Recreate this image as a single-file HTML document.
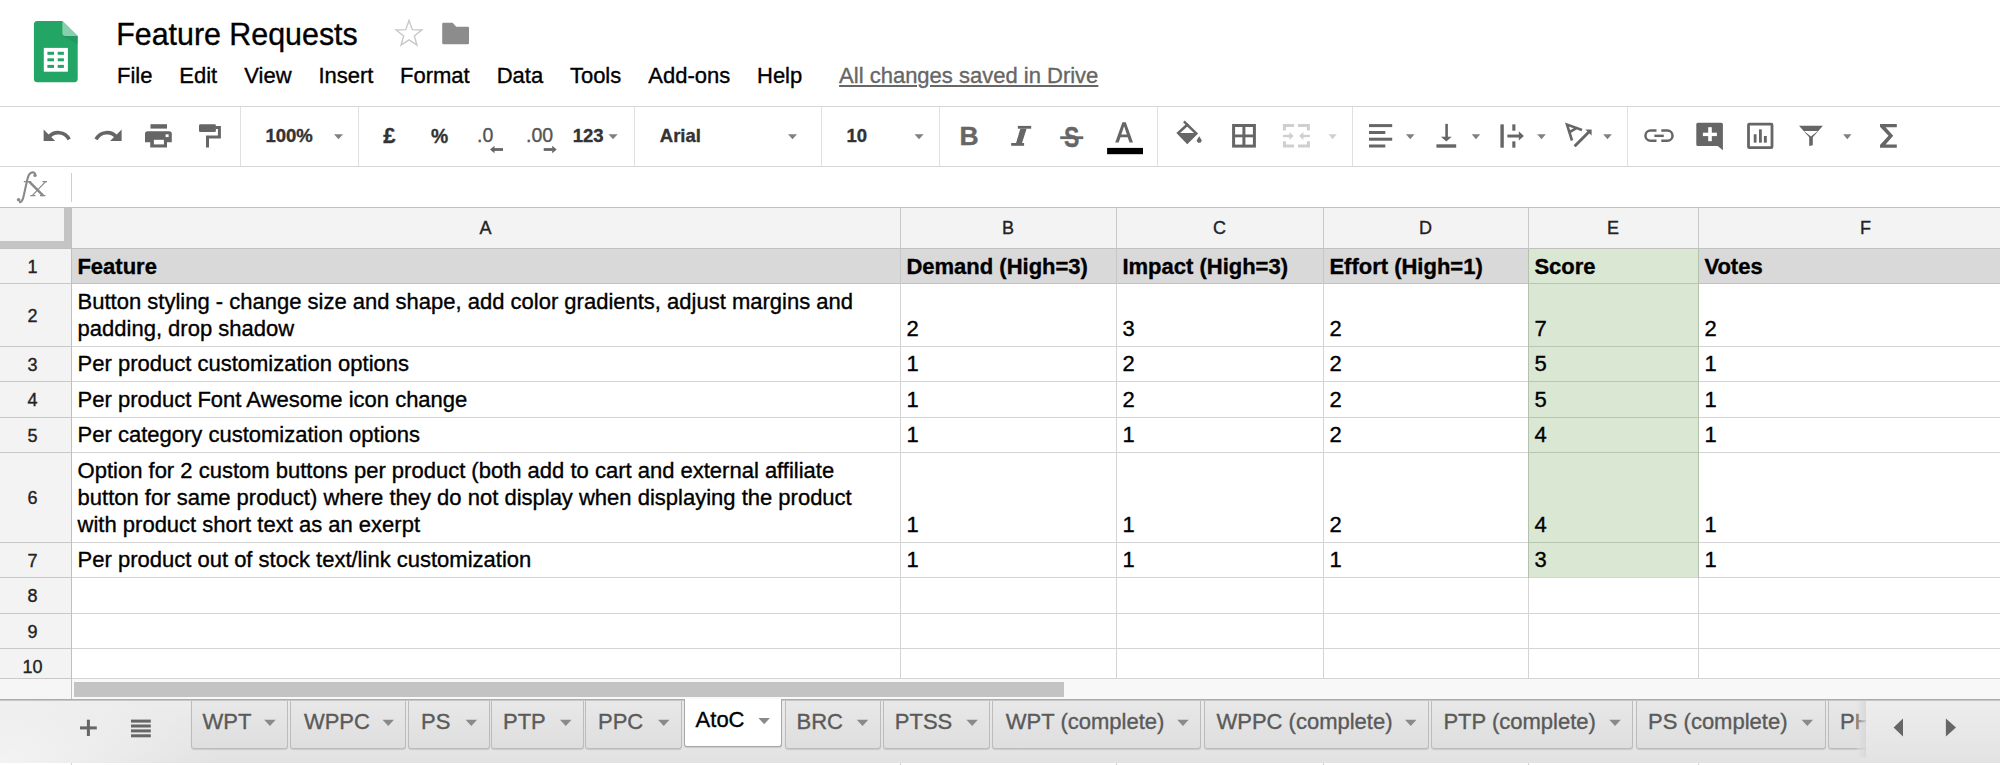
<!DOCTYPE html>
<html><head><meta charset="utf-8"><style>
html,body{margin:0;padding:0;width:2000px;height:765px;overflow:hidden;background:#fff;position:relative;font-family:'Liberation Sans', sans-serif}
.t{position:absolute;white-space:pre;-webkit-text-stroke:0.35px currentColor}
.r{position:absolute}
svg.ic{position:absolute;left:0;top:0}
</style></head><body>
<div class="t" style="left:116.20px;top:19.17px;font-size:30.4px;line-height:30.4px;color:#000;font-weight:normal;font-family:'Liberation Sans', sans-serif;transform:scaleY(1.05);transform-origin:0 25.7px;">Feature Requests</div>
<div class="t" style="left:117.00px;top:64.88px;font-size:22px;line-height:22px;color:#000;font-weight:normal;font-family:'Liberation Sans', sans-serif;">File</div>
<div class="t" style="left:179.30px;top:64.88px;font-size:22px;line-height:22px;color:#000;font-weight:normal;font-family:'Liberation Sans', sans-serif;">Edit</div>
<div class="t" style="left:244.30px;top:64.88px;font-size:22px;line-height:22px;color:#000;font-weight:normal;font-family:'Liberation Sans', sans-serif;">View</div>
<div class="t" style="left:318.40px;top:64.88px;font-size:22px;line-height:22px;color:#000;font-weight:normal;font-family:'Liberation Sans', sans-serif;">Insert</div>
<div class="t" style="left:400.00px;top:64.88px;font-size:22px;line-height:22px;color:#000;font-weight:normal;font-family:'Liberation Sans', sans-serif;">Format</div>
<div class="t" style="left:496.70px;top:64.88px;font-size:22px;line-height:22px;color:#000;font-weight:normal;font-family:'Liberation Sans', sans-serif;">Data</div>
<div class="t" style="left:569.90px;top:64.88px;font-size:22px;line-height:22px;color:#000;font-weight:normal;font-family:'Liberation Sans', sans-serif;">Tools</div>
<div class="t" style="left:648.30px;top:64.88px;font-size:22px;line-height:22px;color:#000;font-weight:normal;font-family:'Liberation Sans', sans-serif;">Add-ons</div>
<div class="t" style="left:757.00px;top:64.88px;font-size:22px;line-height:22px;color:#000;font-weight:normal;font-family:'Liberation Sans', sans-serif;">Help</div>
<div class="t" style="left:839.10px;top:64.88px;font-size:22px;line-height:22px;color:#666;font-weight:normal;font-family:'Liberation Sans', sans-serif;text-decoration:underline;text-decoration-thickness:1.6px;text-underline-offset:2px;">All changes saved in Drive</div>
<div class="r" style="left:0px;top:106px;width:2000px;height:1px;background:#d6d6d6;"></div>
<div class="r" style="left:0px;top:166px;width:2000px;height:1px;background:#d6d6d6;"></div>
<div class="r" style="left:240px;top:107px;width:1px;height:59px;background:#e0e0e0;"></div>
<div class="r" style="left:358px;top:107px;width:1px;height:59px;background:#e0e0e0;"></div>
<div class="r" style="left:634px;top:107px;width:1px;height:59px;background:#e0e0e0;"></div>
<div class="r" style="left:821px;top:107px;width:1px;height:59px;background:#e0e0e0;"></div>
<div class="r" style="left:939px;top:107px;width:1px;height:59px;background:#e0e0e0;"></div>
<div class="r" style="left:1157px;top:107px;width:1px;height:59px;background:#e0e0e0;"></div>
<div class="r" style="left:1352px;top:107px;width:1px;height:59px;background:#e0e0e0;"></div>
<div class="r" style="left:1627px;top:107px;width:1px;height:59px;background:#e0e0e0;"></div>
<div class="t" style="left:265.50px;top:127.14px;font-size:18.5px;line-height:18.5px;color:#333;font-weight:bold;font-family:'Liberation Sans', sans-serif;">100%</div>
<div class="t" style="left:383.20px;top:124.58px;font-size:22px;line-height:22px;color:#333;font-weight:bold;font-family:'Liberation Sans', sans-serif;">£</div>
<div class="t" style="left:430.60px;top:125.42px;font-size:21px;line-height:21px;color:#333;font-weight:bold;font-family:'Liberation Sans', sans-serif;transform:scaleX(0.92);transform-origin:left;">%</div>
<div class="t" style="left:477.00px;top:126.49px;font-size:19.5px;line-height:19.5px;color:#555;font-weight:normal;font-family:'Liberation Sans', sans-serif;">.0</div>
<div class="t" style="left:526.00px;top:126.49px;font-size:19.5px;line-height:19.5px;color:#555;font-weight:normal;font-family:'Liberation Sans', sans-serif;">.00</div>
<div class="t" style="left:572.70px;top:127.34px;font-size:18.5px;line-height:18.5px;color:#333;font-weight:bold;font-family:'Liberation Sans', sans-serif;">123</div>
<div class="t" style="left:659.80px;top:127.14px;font-size:18.5px;line-height:18.5px;color:#333;font-weight:bold;font-family:'Liberation Sans', sans-serif;">Arial</div>
<div class="t" style="left:846.50px;top:127.14px;font-size:18.5px;line-height:18.5px;color:#333;font-weight:bold;font-family:'Liberation Sans', sans-serif;">10</div>
<div class="t" style="left:959.50px;top:123.47px;font-size:26.5px;line-height:26.5px;color:#666;font-weight:bold;font-family:'Liberation Sans', sans-serif;">B</div>
<div class="t" style="left:1063.60px;top:121.63px;font-size:29.5px;line-height:29.5px;color:#666;font-weight:bold;font-family:'Liberation Sans', sans-serif;transform:scaleX(0.78);transform-origin:left">S</div>
<div class="r" style="left:71px;top:173px;width:1px;height:29px;background:#cfcfcf;"></div>
<div class="r" style="left:0px;top:207px;width:2000px;height:1px;background:#c0c0c0;"></div>
<div class="r" style="left:0px;top:208px;width:2000px;height:40px;background:#f3f3f3;"></div>
<div class="r" style="left:0px;top:248px;width:71px;height:431px;background:#f3f3f3;"></div>
<div class="r" style="left:72px;top:248px;width:1928px;height:35px;background:#d9d9d9;"></div>
<div class="r" style="left:1529px;top:249px;width:169px;height:329px;background:#d9e7d3;"></div>
<div class="r" style="left:0px;top:248px;width:2000px;height:1px;background:#c0c0c0;"></div>
<div class="r" style="left:0px;top:283px;width:71px;height:1px;background:#c8c8c8;"></div>
<div class="r" style="left:72px;top:283px;width:1928px;height:1px;background:#c2c2c2;"></div>
<div class="r" style="left:0px;top:346px;width:71px;height:1px;background:#c8c8c8;"></div>
<div class="r" style="left:72px;top:346px;width:1928px;height:1px;background:#d4d4d4;"></div>
<div class="r" style="left:0px;top:381px;width:71px;height:1px;background:#c8c8c8;"></div>
<div class="r" style="left:72px;top:381px;width:1928px;height:1px;background:#d4d4d4;"></div>
<div class="r" style="left:0px;top:417px;width:71px;height:1px;background:#c8c8c8;"></div>
<div class="r" style="left:72px;top:417px;width:1928px;height:1px;background:#d4d4d4;"></div>
<div class="r" style="left:0px;top:452px;width:71px;height:1px;background:#c8c8c8;"></div>
<div class="r" style="left:72px;top:452px;width:1928px;height:1px;background:#d4d4d4;"></div>
<div class="r" style="left:0px;top:542px;width:71px;height:1px;background:#c8c8c8;"></div>
<div class="r" style="left:72px;top:542px;width:1928px;height:1px;background:#d4d4d4;"></div>
<div class="r" style="left:0px;top:577px;width:71px;height:1px;background:#c8c8c8;"></div>
<div class="r" style="left:72px;top:577px;width:1928px;height:1px;background:#d4d4d4;"></div>
<div class="r" style="left:0px;top:613px;width:71px;height:1px;background:#c8c8c8;"></div>
<div class="r" style="left:72px;top:613px;width:1928px;height:1px;background:#d4d4d4;"></div>
<div class="r" style="left:0px;top:648px;width:71px;height:1px;background:#c8c8c8;"></div>
<div class="r" style="left:72px;top:648px;width:1928px;height:1px;background:#d4d4d4;"></div>
<div class="r" style="left:0px;top:678px;width:71px;height:1px;background:#c8c8c8;"></div>
<div class="r" style="left:72px;top:678px;width:1928px;height:1px;background:#d4d4d4;"></div>
<div class="r" style="left:1529px;top:283px;width:169px;height:1px;background:#b7c6b0;"></div>
<div class="r" style="left:1529px;top:346px;width:169px;height:1px;background:#b7c6b0;"></div>
<div class="r" style="left:1529px;top:381px;width:169px;height:1px;background:#b7c6b0;"></div>
<div class="r" style="left:1529px;top:417px;width:169px;height:1px;background:#b7c6b0;"></div>
<div class="r" style="left:1529px;top:452px;width:169px;height:1px;background:#b7c6b0;"></div>
<div class="r" style="left:1529px;top:542px;width:169px;height:1px;background:#b7c6b0;"></div>
<div class="r" style="left:71px;top:208px;width:1px;height:491px;background:#c0c0c0;"></div>
<div class="r" style="left:900px;top:208px;width:1px;height:40px;background:#c8c8c8;"></div>
<div class="r" style="left:900px;top:248px;width:1px;height:35px;background:#c6c6c6;"></div>
<div class="r" style="left:900px;top:283px;width:1px;height:396px;background:#d4d4d4;"></div>
<div class="r" style="left:1116px;top:208px;width:1px;height:40px;background:#c8c8c8;"></div>
<div class="r" style="left:1116px;top:248px;width:1px;height:35px;background:#c6c6c6;"></div>
<div class="r" style="left:1116px;top:283px;width:1px;height:396px;background:#d4d4d4;"></div>
<div class="r" style="left:1323px;top:208px;width:1px;height:40px;background:#c8c8c8;"></div>
<div class="r" style="left:1323px;top:248px;width:1px;height:35px;background:#c6c6c6;"></div>
<div class="r" style="left:1323px;top:283px;width:1px;height:396px;background:#d4d4d4;"></div>
<div class="r" style="left:1528px;top:208px;width:1px;height:40px;background:#c8c8c8;"></div>
<div class="r" style="left:1528px;top:248px;width:1px;height:35px;background:#c6c6c6;"></div>
<div class="r" style="left:1528px;top:283px;width:1px;height:396px;background:#d4d4d4;"></div>
<div class="r" style="left:1698px;top:208px;width:1px;height:40px;background:#c8c8c8;"></div>
<div class="r" style="left:1698px;top:248px;width:1px;height:35px;background:#c6c6c6;"></div>
<div class="r" style="left:1698px;top:283px;width:1px;height:396px;background:#d4d4d4;"></div>
<div class="r" style="left:1528px;top:249px;width:1px;height:329px;background:#b4c2ad;"></div>
<div class="r" style="left:1698px;top:249px;width:1px;height:329px;background:#b4c2ad;"></div>
<div class="r" style="left:64px;top:208px;width:7px;height:40px;background:#c4c4c4;"></div>
<div class="r" style="left:0px;top:241px;width:71px;height:7px;background:#c4c4c4;"></div>
<div class="r" style="left:0px;top:208px;width:64px;height:33px;background:#f3f3f3;"></div>
<div class="t" style="left:71px;width:829px;text-align:center;top:219.26px;font-size:18px;line-height:18px;color:#222">A</div>
<div class="t" style="left:900px;width:216px;text-align:center;top:219.26px;font-size:18px;line-height:18px;color:#222">B</div>
<div class="t" style="left:1116px;width:207px;text-align:center;top:219.26px;font-size:18px;line-height:18px;color:#222">C</div>
<div class="t" style="left:1323px;width:205px;text-align:center;top:219.26px;font-size:18px;line-height:18px;color:#222">D</div>
<div class="t" style="left:1528px;width:170px;text-align:center;top:219.26px;font-size:18px;line-height:18px;color:#222">E</div>
<div class="t" style="left:1698px;width:335px;text-align:center;top:219.26px;font-size:18px;line-height:18px;color:#222">F</div>
<div class="t" style="left:0px;width:65px;text-align:center;top:257.66px;font-size:18px;line-height:18px;color:#222">1</div>
<div class="t" style="left:0px;width:65px;text-align:center;top:306.66px;font-size:18px;line-height:18px;color:#222">2</div>
<div class="t" style="left:0px;width:65px;text-align:center;top:355.66px;font-size:18px;line-height:18px;color:#222">3</div>
<div class="t" style="left:0px;width:65px;text-align:center;top:391.16px;font-size:18px;line-height:18px;color:#222">4</div>
<div class="t" style="left:0px;width:65px;text-align:center;top:426.66px;font-size:18px;line-height:18px;color:#222">5</div>
<div class="t" style="left:0px;width:65px;text-align:center;top:489.16px;font-size:18px;line-height:18px;color:#222">6</div>
<div class="t" style="left:0px;width:65px;text-align:center;top:551.66px;font-size:18px;line-height:18px;color:#222">7</div>
<div class="t" style="left:0px;width:65px;text-align:center;top:587.16px;font-size:18px;line-height:18px;color:#222">8</div>
<div class="t" style="left:0px;width:65px;text-align:center;top:622.66px;font-size:18px;line-height:18px;color:#222">9</div>
<div class="t" style="left:0px;width:65px;text-align:center;top:657.86px;font-size:18px;line-height:18px;color:#222">10</div>
<div class="t" style="left:77.40px;top:255.78px;font-size:22px;line-height:22px;color:#000;font-weight:bold;font-family:'Liberation Sans', sans-serif;">Feature</div>
<div class="t" style="left:906.40px;top:255.78px;font-size:22px;line-height:22px;color:#000;font-weight:bold;font-family:'Liberation Sans', sans-serif;">Demand (High=3)</div>
<div class="t" style="left:1122.40px;top:255.78px;font-size:22px;line-height:22px;color:#000;font-weight:bold;font-family:'Liberation Sans', sans-serif;">Impact (High=3)</div>
<div class="t" style="left:1329.40px;top:255.78px;font-size:22px;line-height:22px;color:#000;font-weight:bold;font-family:'Liberation Sans', sans-serif;">Effort (High=1)</div>
<div class="t" style="left:1534.40px;top:255.78px;font-size:22px;line-height:22px;color:#000;font-weight:bold;font-family:'Liberation Sans', sans-serif;">Score</div>
<div class="t" style="left:1704.40px;top:255.78px;font-size:22px;line-height:22px;color:#000;font-weight:bold;font-family:'Liberation Sans', sans-serif;">Votes</div>
<div class="t" style="left:77.60px;top:291.33px;font-size:22px;line-height:22px;color:#000;font-weight:normal;font-family:'Liberation Sans', sans-serif;">Button styling - change size and shape, add color gradients, adjust margins and</div>
<div class="t" style="left:77.60px;top:318.18px;font-size:22px;line-height:22px;color:#000;font-weight:normal;font-family:'Liberation Sans', sans-serif;">padding, drop shadow</div>
<div class="t" style="left:906.60px;top:318.18px;font-size:22px;line-height:22px;color:#000;font-weight:normal;font-family:'Liberation Sans', sans-serif;">2</div>
<div class="t" style="left:1122.60px;top:318.18px;font-size:22px;line-height:22px;color:#000;font-weight:normal;font-family:'Liberation Sans', sans-serif;">3</div>
<div class="t" style="left:1329.60px;top:318.18px;font-size:22px;line-height:22px;color:#000;font-weight:normal;font-family:'Liberation Sans', sans-serif;">2</div>
<div class="t" style="left:1534.60px;top:318.18px;font-size:22px;line-height:22px;color:#000;font-weight:normal;font-family:'Liberation Sans', sans-serif;">7</div>
<div class="t" style="left:1704.60px;top:318.18px;font-size:22px;line-height:22px;color:#000;font-weight:normal;font-family:'Liberation Sans', sans-serif;">2</div>
<div class="t" style="left:77.60px;top:353.18px;font-size:22px;line-height:22px;color:#000;font-weight:normal;font-family:'Liberation Sans', sans-serif;">Per product customization options</div>
<div class="t" style="left:906.60px;top:353.18px;font-size:22px;line-height:22px;color:#000;font-weight:normal;font-family:'Liberation Sans', sans-serif;">1</div>
<div class="t" style="left:1122.60px;top:353.18px;font-size:22px;line-height:22px;color:#000;font-weight:normal;font-family:'Liberation Sans', sans-serif;">2</div>
<div class="t" style="left:1329.60px;top:353.18px;font-size:22px;line-height:22px;color:#000;font-weight:normal;font-family:'Liberation Sans', sans-serif;">2</div>
<div class="t" style="left:1534.60px;top:353.18px;font-size:22px;line-height:22px;color:#000;font-weight:normal;font-family:'Liberation Sans', sans-serif;">5</div>
<div class="t" style="left:1704.60px;top:353.18px;font-size:22px;line-height:22px;color:#000;font-weight:normal;font-family:'Liberation Sans', sans-serif;">1</div>
<div class="t" style="left:77.60px;top:389.18px;font-size:22px;line-height:22px;color:#000;font-weight:normal;font-family:'Liberation Sans', sans-serif;">Per product Font Awesome icon change</div>
<div class="t" style="left:906.60px;top:389.18px;font-size:22px;line-height:22px;color:#000;font-weight:normal;font-family:'Liberation Sans', sans-serif;">1</div>
<div class="t" style="left:1122.60px;top:389.18px;font-size:22px;line-height:22px;color:#000;font-weight:normal;font-family:'Liberation Sans', sans-serif;">2</div>
<div class="t" style="left:1329.60px;top:389.18px;font-size:22px;line-height:22px;color:#000;font-weight:normal;font-family:'Liberation Sans', sans-serif;">2</div>
<div class="t" style="left:1534.60px;top:389.18px;font-size:22px;line-height:22px;color:#000;font-weight:normal;font-family:'Liberation Sans', sans-serif;">5</div>
<div class="t" style="left:1704.60px;top:389.18px;font-size:22px;line-height:22px;color:#000;font-weight:normal;font-family:'Liberation Sans', sans-serif;">1</div>
<div class="t" style="left:77.60px;top:424.18px;font-size:22px;line-height:22px;color:#000;font-weight:normal;font-family:'Liberation Sans', sans-serif;">Per category customization options</div>
<div class="t" style="left:906.60px;top:424.18px;font-size:22px;line-height:22px;color:#000;font-weight:normal;font-family:'Liberation Sans', sans-serif;">1</div>
<div class="t" style="left:1122.60px;top:424.18px;font-size:22px;line-height:22px;color:#000;font-weight:normal;font-family:'Liberation Sans', sans-serif;">1</div>
<div class="t" style="left:1329.60px;top:424.18px;font-size:22px;line-height:22px;color:#000;font-weight:normal;font-family:'Liberation Sans', sans-serif;">2</div>
<div class="t" style="left:1534.60px;top:424.18px;font-size:22px;line-height:22px;color:#000;font-weight:normal;font-family:'Liberation Sans', sans-serif;">4</div>
<div class="t" style="left:1704.60px;top:424.18px;font-size:22px;line-height:22px;color:#000;font-weight:normal;font-family:'Liberation Sans', sans-serif;">1</div>
<div class="t" style="left:77.60px;top:460.48px;font-size:22px;line-height:22px;color:#000;font-weight:normal;font-family:'Liberation Sans', sans-serif;">Option for 2 custom buttons per product (both add to cart and external affiliate</div>
<div class="t" style="left:77.60px;top:487.33px;font-size:22px;line-height:22px;color:#000;font-weight:normal;font-family:'Liberation Sans', sans-serif;">button for same product) where they do not display when displaying the product</div>
<div class="t" style="left:77.60px;top:514.18px;font-size:22px;line-height:22px;color:#000;font-weight:normal;font-family:'Liberation Sans', sans-serif;">with product short text as an exerpt</div>
<div class="t" style="left:906.60px;top:514.18px;font-size:22px;line-height:22px;color:#000;font-weight:normal;font-family:'Liberation Sans', sans-serif;">1</div>
<div class="t" style="left:1122.60px;top:514.18px;font-size:22px;line-height:22px;color:#000;font-weight:normal;font-family:'Liberation Sans', sans-serif;">1</div>
<div class="t" style="left:1329.60px;top:514.18px;font-size:22px;line-height:22px;color:#000;font-weight:normal;font-family:'Liberation Sans', sans-serif;">2</div>
<div class="t" style="left:1534.60px;top:514.18px;font-size:22px;line-height:22px;color:#000;font-weight:normal;font-family:'Liberation Sans', sans-serif;">4</div>
<div class="t" style="left:1704.60px;top:514.18px;font-size:22px;line-height:22px;color:#000;font-weight:normal;font-family:'Liberation Sans', sans-serif;">1</div>
<div class="t" style="left:77.60px;top:549.18px;font-size:22px;line-height:22px;color:#000;font-weight:normal;font-family:'Liberation Sans', sans-serif;">Per product out of stock text/link customization</div>
<div class="t" style="left:906.60px;top:549.18px;font-size:22px;line-height:22px;color:#000;font-weight:normal;font-family:'Liberation Sans', sans-serif;">1</div>
<div class="t" style="left:1122.60px;top:549.18px;font-size:22px;line-height:22px;color:#000;font-weight:normal;font-family:'Liberation Sans', sans-serif;">1</div>
<div class="t" style="left:1329.60px;top:549.18px;font-size:22px;line-height:22px;color:#000;font-weight:normal;font-family:'Liberation Sans', sans-serif;">1</div>
<div class="t" style="left:1534.60px;top:549.18px;font-size:22px;line-height:22px;color:#000;font-weight:normal;font-family:'Liberation Sans', sans-serif;">3</div>
<div class="t" style="left:1704.60px;top:549.18px;font-size:22px;line-height:22px;color:#000;font-weight:normal;font-family:'Liberation Sans', sans-serif;">1</div>
<div class="r" style="left:72px;top:679px;width:1928px;height:20px;background:#f8f8f8;"></div>
<div class="r" style="left:0px;top:679px;width:71px;height:20px;background:#f6f6f6;"></div>
<div class="r" style="left:74px;top:682px;width:990px;height:15px;background:#c3c3c3;"></div>
<div class="r" style="left:0px;top:699px;width:2000px;height:64px;background:linear-gradient(to bottom,#ededed,#e2e2e2);"></div>
<div class="r" style="left:0px;top:699px;width:220px;height:64px;background:radial-gradient(ellipse 220px 80px at 0% 100%,rgba(255,255,255,0.6),rgba(255,255,255,0));"></div>
<div class="r" style="left:0px;top:699px;width:2000px;height:1px;background:#acacac;"></div>
<div class="r" style="left:0px;top:700px;width:2000px;height:1px;background:#c6c6c6;"></div>
<div class="r" style="left:0px;top:763px;width:2000px;height:2px;background:#fff;"></div>
<div class="r" style="left:71px;top:763px;width:1px;height:2px;background:#d4d4d4;"></div>
<div class="r" style="left:900px;top:763px;width:1px;height:2px;background:#d4d4d4;"></div>
<div class="r" style="left:1116px;top:763px;width:1px;height:2px;background:#d4d4d4;"></div>
<div class="r" style="left:1323px;top:763px;width:1px;height:2px;background:#d4d4d4;"></div>
<div class="r" style="left:1528px;top:763px;width:1px;height:2px;background:#d4d4d4;"></div>
<div class="r" style="left:1698px;top:763px;width:1px;height:2px;background:#d4d4d4;"></div>
<div class="r" style="left:190.5px;top:700.6px;width:97.7px;height:48.0px;background:linear-gradient(to bottom,#e8e8e8,#dedede);border:1px solid #bcbcbc;border-top:none;box-sizing:border-box;border-radius:0 0 3px 3px;box-shadow:0 1px 1px rgba(0,0,0,0.12);overflow:hidden"></div>
<div class="t" style="left:202.50px;top:710.78px;font-size:22px;line-height:22px;color:#5a5a5a;font-weight:normal;font-family:'Liberation Sans', sans-serif;">WPT</div>
<div class="r" style="left:290.4px;top:700.6px;width:116.1px;height:48.0px;background:linear-gradient(to bottom,#e8e8e8,#dedede);border:1px solid #bcbcbc;border-top:none;box-sizing:border-box;border-radius:0 0 3px 3px;box-shadow:0 1px 1px rgba(0,0,0,0.12);overflow:hidden"></div>
<div class="t" style="left:303.90px;top:710.78px;font-size:22px;line-height:22px;color:#5a5a5a;font-weight:normal;font-family:'Liberation Sans', sans-serif;">WPPC</div>
<div class="r" style="left:408px;top:700.6px;width:81.6px;height:48.0px;background:linear-gradient(to bottom,#e8e8e8,#dedede);border:1px solid #bcbcbc;border-top:none;box-sizing:border-box;border-radius:0 0 3px 3px;box-shadow:0 1px 1px rgba(0,0,0,0.12);overflow:hidden"></div>
<div class="t" style="left:421.00px;top:710.78px;font-size:22px;line-height:22px;color:#5a5a5a;font-weight:normal;font-family:'Liberation Sans', sans-serif;">PS</div>
<div class="r" style="left:491px;top:700.6px;width:93.0px;height:48.0px;background:linear-gradient(to bottom,#e8e8e8,#dedede);border:1px solid #bcbcbc;border-top:none;box-sizing:border-box;border-radius:0 0 3px 3px;box-shadow:0 1px 1px rgba(0,0,0,0.12);overflow:hidden"></div>
<div class="t" style="left:503.00px;top:710.78px;font-size:22px;line-height:22px;color:#5a5a5a;font-weight:normal;font-family:'Liberation Sans', sans-serif;">PTP</div>
<div class="r" style="left:585px;top:700.6px;width:97.0px;height:48.0px;background:linear-gradient(to bottom,#e8e8e8,#dedede);border:1px solid #bcbcbc;border-top:none;box-sizing:border-box;border-radius:0 0 3px 3px;box-shadow:0 1px 1px rgba(0,0,0,0.12);overflow:hidden"></div>
<div class="t" style="left:598.00px;top:710.78px;font-size:22px;line-height:22px;color:#5a5a5a;font-weight:normal;font-family:'Liberation Sans', sans-serif;">PPC</div>
<div class="r" style="left:683.6px;top:698.6px;width:98.8px;height:48.0px;background:#ffffff;border:1px solid #a8a8a8;border-top:none;box-sizing:border-box;border-radius:0 0 3px 3px;box-shadow:0 1px 1px rgba(0,0,0,0.12);overflow:hidden"></div>
<div class="t" style="left:695.60px;top:708.98px;font-size:22px;line-height:22px;color:#000;font-weight:normal;font-family:'Liberation Sans', sans-serif;">AtoC</div>
<div class="r" style="left:784.5px;top:700.6px;width:96.3px;height:48.0px;background:linear-gradient(to bottom,#e8e8e8,#dedede);border:1px solid #bcbcbc;border-top:none;box-sizing:border-box;border-radius:0 0 3px 3px;box-shadow:0 1px 1px rgba(0,0,0,0.12);overflow:hidden"></div>
<div class="t" style="left:796.50px;top:710.78px;font-size:22px;line-height:22px;color:#5a5a5a;font-weight:normal;font-family:'Liberation Sans', sans-serif;">BRC</div>
<div class="r" style="left:882.8px;top:700.6px;width:107.6px;height:48.0px;background:linear-gradient(to bottom,#e8e8e8,#dedede);border:1px solid #bcbcbc;border-top:none;box-sizing:border-box;border-radius:0 0 3px 3px;box-shadow:0 1px 1px rgba(0,0,0,0.12);overflow:hidden"></div>
<div class="t" style="left:894.80px;top:710.78px;font-size:22px;line-height:22px;color:#5a5a5a;font-weight:normal;font-family:'Liberation Sans', sans-serif;">PTSS</div>
<div class="r" style="left:992px;top:700.6px;width:209.2px;height:48.0px;background:linear-gradient(to bottom,#e8e8e8,#dedede);border:1px solid #bcbcbc;border-top:none;box-sizing:border-box;border-radius:0 0 3px 3px;box-shadow:0 1px 1px rgba(0,0,0,0.12);overflow:hidden"></div>
<div class="t" style="left:1005.80px;top:710.78px;font-size:22px;line-height:22px;color:#5a5a5a;font-weight:normal;font-family:'Liberation Sans', sans-serif;">WPT (complete)</div>
<div class="r" style="left:1203.5px;top:700.6px;width:225.5px;height:48.0px;background:linear-gradient(to bottom,#e8e8e8,#dedede);border:1px solid #bcbcbc;border-top:none;box-sizing:border-box;border-radius:0 0 3px 3px;box-shadow:0 1px 1px rgba(0,0,0,0.12);overflow:hidden"></div>
<div class="t" style="left:1216.50px;top:710.78px;font-size:22px;line-height:22px;color:#5a5a5a;font-weight:normal;font-family:'Liberation Sans', sans-serif;">WPPC (complete)</div>
<div class="r" style="left:1431.4px;top:700.6px;width:201.9px;height:48.0px;background:linear-gradient(to bottom,#e8e8e8,#dedede);border:1px solid #bcbcbc;border-top:none;box-sizing:border-box;border-radius:0 0 3px 3px;box-shadow:0 1px 1px rgba(0,0,0,0.12);overflow:hidden"></div>
<div class="t" style="left:1443.40px;top:710.78px;font-size:22px;line-height:22px;color:#5a5a5a;font-weight:normal;font-family:'Liberation Sans', sans-serif;">PTP (complete)</div>
<div class="r" style="left:1635.6px;top:700.6px;width:190.0px;height:48.0px;background:linear-gradient(to bottom,#e8e8e8,#dedede);border:1px solid #bcbcbc;border-top:none;box-sizing:border-box;border-radius:0 0 3px 3px;box-shadow:0 1px 1px rgba(0,0,0,0.12);overflow:hidden"></div>
<div class="t" style="left:1648.10px;top:710.78px;font-size:22px;line-height:22px;color:#5a5a5a;font-weight:normal;font-family:'Liberation Sans', sans-serif;">PS (complete)</div>
<div class="r" style="left:1828px;top:700.6px;width:72.0px;height:48.0px;background:linear-gradient(to bottom,#e8e8e8,#dedede);border:1px solid #bcbcbc;border-top:none;box-sizing:border-box;border-radius:0 0 3px 3px;box-shadow:0 1px 1px rgba(0,0,0,0.12);overflow:hidden"></div>
<div class="t" style="left:1840.00px;top:710.78px;font-size:22px;line-height:22px;color:#5a5a5a;font-weight:normal;font-family:'Liberation Sans', sans-serif;">PH</div>
<div class="r" style="left:1866px;top:701px;width:134px;height:61px;background:linear-gradient(to bottom,#ededed,#e3e3e3);"></div>
<div class="r" style="left:1857px;top:701px;width:9px;height:56px;background:linear-gradient(to right,rgba(230,230,230,0.3),rgba(215,215,215,0.9));"></div>
<svg class="ic" width="2000" height="765" viewBox="0 0 2000 765">
<path d="M37.5,21 H62.4 L77.7,36.1 V78.7 a3.5,3.5 0 0 1 -3.5,3.5 H37.4 a3.5,3.5 0 0 1 -3.5,-3.5 V24.5 a3.5,3.5 0 0 1 3.6,-3.5 Z" fill="#23a566"/>
<path d="M62.4,21 L77.7,36.1 H65.4 a3,3 0 0 1 -3,-3 Z" fill="#87cfae"/>
<path d="M62.4,36.1 L77.7,36.1 L77.7,44 Z" fill="#1e8f58" opacity="0.5"/>
<rect x="43.8" y="47.9" width="24.1" height="23.8" fill="#fff"/>
<rect x="47.4" y="51.8" width="6.6" height="3" fill="#23a566"/>
<rect x="57.7" y="51.8" width="6.2" height="3" fill="#23a566"/>
<rect x="47.4" y="58.3" width="6.6" height="3" fill="#23a566"/>
<rect x="57.7" y="58.3" width="6.2" height="3" fill="#23a566"/>
<rect x="47.4" y="64.9" width="6.6" height="3" fill="#23a566"/>
<rect x="57.7" y="64.9" width="6.2" height="3" fill="#23a566"/>
<polygon points="409.00,20.60 412.29,29.67 421.93,30.00 414.33,35.93 416.99,45.20 409.00,39.80 401.01,45.20 403.67,35.93 396.07,30.00 405.71,29.67" fill="none" stroke="#c8c8c8" stroke-width="1.4" stroke-linejoin="miter"/>
<path d="M443.5,22.7 H452.6 L456.2,26.7 H467.8 a1.2,1.2 0 0 1 1.2,1.2 V43.1 a1.2,1.2 0 0 1 -1.2,1.2 H443.4 a1.2,1.2 0 0 1 -1.2,-1.2 V24 a1.3,1.3 0 0 1 1.3,-1.3 Z" fill="#8c8c8c"/>
<path d="M43.6,129.4 V140.9 H55.2 Z" fill="#666"/>
<path d="M48.6,137.2 A12.4,12.4 0 0 1 69.2,139.4" fill="none" stroke="#666" stroke-width="3.6"/>
<g transform="translate(165.25,0) scale(-1,1)"><path d="M43.6,129.4 V140.9 H55.2 Z" fill="#666"/><path d="M48.6,137.2 A12.4,12.4 0 0 1 69.2,139.4" fill="none" stroke="#666" stroke-width="3.6"/></g>
<rect x="150.5" y="124.2" width="16.5" height="4.4" fill="#666"/>
<path d="M147.5,131.3 H169.3 a2.5,2.5 0 0 1 2.5,2.5 V142.3 H145 V133.8 a2.5,2.5 0 0 1 2.5,-2.5 Z" fill="#666"/>
<rect x="150.2" y="139.1" width="16.8" height="8.4" fill="#666"/>
<rect x="153.9" y="139.8" width="10" height="4.6" fill="#fff"/>
<rect x="165.6" y="134.3" width="3" height="2.8" fill="#fff"/>
<rect x="199" y="124.2" width="16.9" height="7.9" rx="1.3" fill="#666"/>
<path d="M215.5,127.6 H219.4 V136.9 H207.5 V147.5" fill="none" stroke="#666" stroke-width="3"/>
<path d="M334,134.2 H343 L338.50,139.3 Z" fill="#808080"/>
<path d="M494,149.5 H503" stroke="#666" stroke-width="2.8"/><path d="M490,149.5 L494.5,145.7 V153.3 Z" fill="#666"/>
<path d="M543.7,149.5 H552.5" stroke="#666" stroke-width="2.8"/><path d="M556.7,149.5 L552.2,145.7 V153.3 Z" fill="#666"/>
<path d="M608.5,134.2 H617.6 L613.05,139.3 Z" fill="#808080"/>
<path d="M788,134.2 H797 L792.50,139.3 Z" fill="#808080"/>
<path d="M914.5,134.2 H923.6 L919.05,139.3 Z" fill="#808080"/>
<rect x="1017.8" y="125.9" width="13.4" height="2.8" fill="#666"/>
<rect x="1011.2" y="143" width="12.9" height="2.8" fill="#666"/>
<path d="M1020.3,128.7 H1026.6 L1022,143 H1016.1 Z" fill="#666"/>
<rect x="1060.2" y="136.3" width="23.1" height="2.8" fill="#666"/>
<path d="M1115.2,142.6 L1122.4,122.3 H1125.8 L1133,142.6 H1129.5 L1127.7,137.2 H1120.5 L1118.7,142.6 Z M1121.3,134.6 H1126.9 L1124.1,126.3 Z" fill="#666" fill-rule="evenodd"/>
<rect x="1107.1" y="147.9" width="35.9" height="6.3" fill="#000"/>
<path d="M1178.25,133 L1187.25,124.75 L1196.25,133.4 L1187.25,142.4 Z" fill="none" stroke="#666" stroke-width="2.6" stroke-linejoin="miter"/>
<path d="M1178.25,133 H1196.25 L1187.25,142.4 Z" fill="#666"/>
<path d="M1183.9,121.4 L1188.3,125.9" stroke="#666" stroke-width="2.4"/>
<path d="M1199.25,136.2 L1201.6,139.9 a2.4,2.4 0 1 1 -4.7,0 Z" fill="#666"/>
<rect x="1233.6" y="125.5" width="20.8" height="20.6" fill="none" stroke="#666" stroke-width="3"/>
<rect x="1242.4" y="125.5" width="3" height="20.6" fill="#666"/>
<rect x="1233.6" y="134.5" width="20.8" height="2.8" fill="#666"/>
<path d="M1284.4,130.4 V125.5 H1294.1 M1298,125.5 H1308.4 V130.4 M1284.4,141.3 V146.1 H1294.1 M1298,146.1 H1308.4 V141.3" fill="none" stroke="#cfcfcf" stroke-width="3"/>
<path d="M1282.9,136 H1290" stroke="#cfcfcf" stroke-width="2.4"/><path d="M1289.5,131.9 L1293.6,136 L1289.5,140.1 Z" fill="#cfcfcf"/>
<path d="M1309.9,136 H1302.8" stroke="#cfcfcf" stroke-width="2.4"/><path d="M1303.3,131.9 L1299.2,136 L1303.3,140.1 Z" fill="#cfcfcf"/>
<path d="M1328.5,134.2 H1336.7 L1332.60,139.3 Z" fill="#d0d0d0"/>
<rect x="1369" y="124.1" width="23.2" height="3" fill="#666"/>
<rect x="1369" y="131.0" width="16.3" height="3" fill="#666"/>
<rect x="1369" y="137.7" width="23.2" height="3" fill="#666"/>
<rect x="1369" y="144.5" width="16.3" height="3" fill="#666"/>
<path d="M1406,134.2 H1414.5 L1410.25,139.3 Z" fill="#808080"/>
<rect x="1445.3" y="123.9" width="2.6" height="13.5" fill="#666"/>
<path d="M1441,136.7 H1451.7 L1446.3,141.4 Z" fill="#666"/>
<rect x="1436.4" y="144.3" width="19.8" height="3.4" fill="#666"/>
<path d="M1471.7,134.2 H1480.2 L1475.95,139.3 Z" fill="#808080"/>
<rect x="1500.4" y="124.35" width="3.4" height="23.35" fill="#666"/>
<rect x="1512.3" y="124.35" width="3.1" height="6.35" fill="#666"/>
<rect x="1512.3" y="141.35" width="3.1" height="6.35" fill="#666"/>
<rect x="1507.35" y="134.55" width="12.5" height="2.95" fill="#666"/>
<path d="M1518.8,131.15 L1523.9,136.1 L1518.8,140.5 Z" fill="#666"/>
<path d="M1537.2,134.2 H1545.8 L1541.50,139.3 Z" fill="#808080"/>
<path d="M1582,129.9 L1567,124.6 L1572,140.5 M1569.6,132.2 L1577.2,127.7" fill="none" stroke="#666" stroke-width="2.6"/>
<path d="M1574.6,146.2 L1589.6,131.2" stroke="#666" stroke-width="3"/>
<path d="M1585.4,129.4 H1591.6 V135.6 Z" fill="#666"/>
<path d="M1603.2,134.2 H1611.8 L1607.50,139.3 Z" fill="#808080"/>
<path d="M1656.5,130.6 H1650.5 a5.05,5.05 0 0 0 0,10.1 H1656.5 M1661.3,130.6 H1667.5 a5.05,5.05 0 0 1 0,10.1 H1661.3" fill="none" stroke="#666" stroke-width="2.5"/>
<rect x="1654.35" y="134.6" width="9.45" height="2.45" fill="#666"/>
<path d="M1697.8,122.7 H1721.4 a1.5,1.5 0 0 1 1.5,1.5 V150.35 L1717.7,146 H1697.8 a1.5,1.5 0 0 1 -1.5,-1.5 V124.2 a1.5,1.5 0 0 1 1.5,-1.5 Z" fill="#666"/>
<rect x="1702.9" y="132.7" width="14" height="3.4" fill="#fff"/><rect x="1708.2" y="127.2" width="3.6" height="14" fill="#fff"/>
<rect x="1748.5" y="124.1" width="23.5" height="23.5" rx="0.8" fill="none" stroke="#666" stroke-width="2.8"/>
<rect x="1753.75" y="134.25" width="2.8" height="8.4" fill="#666"/><rect x="1759" y="129.35" width="2.8" height="13.3" fill="#666"/><rect x="1763.9" y="136" width="2.9" height="6.65" fill="#666"/>
<path d="M1799,125.8 H1822.9 L1812.8,137.2 V145.3 L1809.2,146 V137.2 Z M1804,130.9 H1817.8 L1810.9,136.4 Z" fill="#666" fill-rule="evenodd"/>
<path d="M1843.1,134.2 H1851.5 L1847.30,139.3 Z" fill="#808080"/>
<path d="M1880,124 H1896.8 V127.3 H1885.6 L1893.2,135.8 L1885.6,144.4 H1896.8 V147.7 H1880 V144.9 L1888.5,135.8 L1880,126.8 Z" fill="#666"/>
<path d="M35.2,175.6 C35.6,173.4 34,172.2 32.4,172.4 C29.6,172.7 28.1,175.6 27.2,180 L23.6,196.2 C22.8,200.2 21,202.3 19,202.3" fill="none" stroke="#8a8a8a" stroke-width="2.1"/>
<circle cx="35.0" cy="175.4" r="1.7" fill="#8a8a8a"/><circle cx="18.6" cy="199.8" r="1.8" fill="#8a8a8a"/>
<path d="M23.8,181.6 H31.2 M42.4,181.6 H47 M30.2,195.6 H35.4 M40,195.6 H45.4" stroke="#8a8a8a" stroke-width="1.3"/>
<path d="M29.2,181.6 L43.2,195.6" stroke="#8a8a8a" stroke-width="2.5"/><path d="M45.6,181.6 L32.2,195.6" stroke="#8a8a8a" stroke-width="1.3"/>
<rect x="80" y="726.4" width="16.8" height="3" fill="#666"/><rect x="86.9" y="719.7" width="3" height="16.3" fill="#666"/>
<rect x="131" y="719.6" width="19.8" height="3" fill="#666"/>
<rect x="131" y="724.5" width="19.8" height="3" fill="#666"/>
<rect x="131" y="729.4" width="19.8" height="3" fill="#666"/>
<rect x="131" y="734.3" width="19.8" height="3" fill="#666"/>
<path d="M264.2,719.6999999999999 H275.7 L269.95,726.0 Z" fill="#8a8a8a"/>
<path d="M382.5,719.6999999999999 H394.0 L388.25,726.0 Z" fill="#8a8a8a"/>
<path d="M465.6,719.6999999999999 H477.1 L471.35,726.0 Z" fill="#8a8a8a"/>
<path d="M560,719.6999999999999 H571.5 L565.75,726.0 Z" fill="#8a8a8a"/>
<path d="M658,719.6999999999999 H669.5 L663.75,726.0 Z" fill="#8a8a8a"/>
<path d="M758.4,717.9 H769.9 L764.15,724.2 Z" fill="#8a8a8a"/>
<path d="M856.8,719.6999999999999 H868.3 L862.55,726.0 Z" fill="#8a8a8a"/>
<path d="M966.4,719.6999999999999 H977.9 L972.15,726.0 Z" fill="#8a8a8a"/>
<path d="M1177.2,719.6999999999999 H1188.7 L1182.95,726.0 Z" fill="#8a8a8a"/>
<path d="M1405,719.6999999999999 H1416.5 L1410.75,726.0 Z" fill="#8a8a8a"/>
<path d="M1609.3,719.6999999999999 H1620.8 L1615.05,726.0 Z" fill="#8a8a8a"/>
<path d="M1801.6,719.6999999999999 H1813.1 L1807.35,726.0 Z" fill="#8a8a8a"/>
<path d="M1903,718.5 V736.6 L1893.6,727.5 Z" fill="#666"/>
<path d="M1945.9,718.5 V736.6 L1956,727.5 Z" fill="#666"/>
</svg>
</body></html>
